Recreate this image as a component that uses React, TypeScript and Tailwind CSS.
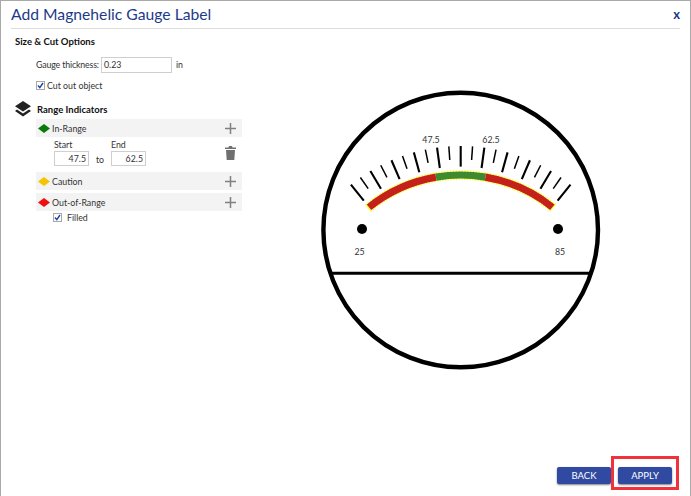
const CX = 460.7;
const CY = 321.6;
const STEP = 3.87;

const polar = (r: number, deg: number) => {
  const a = (deg * Math.PI) / 180;
  return { x: CX + r * Math.sin(a), y: CY - r * Math.cos(a) };
};

const arc = (r: number, from: number, to: number) => {
  const a = polar(r, from);
  const b = polar(r, to);
  return `M${a.x} ${a.y}A${r} ${r} 0 0 1 ${b.x} ${b.y}`;
};

const ticks = Array.from({ length: 21 }, (_, i) => {
  const deg = (i - 10) * STEP;
  const major = i % 2 === 0;
  const outer = polar(175.6, deg);
  const inner = polar(major ? 155 : 162, deg);
  return { key: i, major, outer, inner };
});

function Gauge() {
  return (
    <svg width="300" height="300" viewBox="311 80 300 300" className="shrink-0">
      <circle cx="460.7" cy="230" r="137.3" fill="none" stroke="#000" strokeWidth="4.4" />
      <line x1="331" y1="273.2" x2="590" y2="273.2" stroke="#000" strokeWidth="3" />
      {ticks.map((t) => (
        <line
          key={t.key}
          x1={t.outer.x}
          y1={t.outer.y}
          x2={t.inner.x}
          y2={t.inner.y}
          stroke="#000"
          strokeWidth={t.major ? 2.1 : 1.5}
        />
      ))}
      <path d={arc(146.6, -39.2, 39.2)} fill="none" stroke="#ffff00" strokeWidth="9.6" strokeDasharray="1.4 1.4" />
      <path d={arc(146.6, -38.7, -9.7)} fill="none" stroke="#c4211b" strokeWidth="7.2" />
      <path d={arc(146.6, -9.7, 9.7)} fill="none" stroke="#3f8a2e" strokeWidth="7.2" />
      <path d={arc(146.6, 9.7, 38.7)} fill="none" stroke="#c4211b" strokeWidth="7.2" />
      <circle cx="362" cy="229" r="5" fill="#000" />
      <circle cx="558" cy="229" r="5" fill="#000" />
      <g fontSize="8.8" fill="#333" textAnchor="middle" fontFamily="Lato, sans-serif">
        <text x="431" y="143">47.5</text>
        <text x="491" y="143">62.5</text>
        <text x="359.5" y="255">25</text>
        <text x="560" y="255">85</text>
      </g>
    </svg>
  );
}

function Check() {
  return (
    <span className="flex h-[9px] w-[9px] items-center justify-center border border-[#a8a8a8] bg-white">
      <svg width="7" height="7" viewBox="0 0 7 7">
        <path d="M1 3.5L2.8 5.6L6 1" fill="none" stroke="#1c3fa8" strokeWidth="1.4" />
      </svg>
    </span>
  );
}

function Plus() {
  return (
    <svg width="11" height="11" viewBox="0 0 11 11" className="mr-[6px]">
      <path d="M5.5 0V11M0 5.5H11" stroke="#808080" strokeWidth="1.5" />
    </svg>
  );
}

function RangeRow({ color, label }: { color: string; label: string }) {
  return (
    <div className="flex h-[18px] items-center justify-between bg-[#f3f3f3]">
      <div className="flex items-center">
        <svg width="12" height="9" viewBox="0 0 12 9" className="ml-[2px] mr-[2px]">
          <path d="M6 0L12 4.5L6 9L0 4.5Z" fill={color} />
        </svg>
        <span>{label}</span>
      </div>
      <Plus />
    </div>
  );
}

function NumberBox({ value }: { value: string }) {
  return (
    <div className="h-[15px] w-[35px] border border-[#cfcfcf] bg-white pr-[2px] text-right leading-[13px]">
      {value}
    </div>
  );
}

export default function App() {
  return (
    <div className="relative flex h-[496px] w-[691px] flex-col overflow-hidden border-x border-t border-[#a9a9a9] bg-white font-['Lato',sans-serif] text-[8.8px] text-[#333]">
      <header className="mx-[10px] flex h-[28px] shrink-0 items-center justify-between border-b border-[#dcdcdc]">
        <h1 className="text-[15.7px] text-[#1d3a8a]">Add Magnehelic Gauge Label</h1>
        <span className="text-[13px] font-bold text-[#1d3a8a]">x</span>
      </header>

      <main className="flex min-h-0 flex-1">
        <div className="w-[241px] shrink-0 pl-[14px] pt-[7px]">
          <h2 className="text-[9.5px] font-bold leading-[12px] text-[#111]">Size &amp; Cut Options</h2>

          <div className="ml-[21px] mt-[9px] flex items-center gap-[2px]">
            <span className="w-[63px] whitespace-nowrap tracking-[-0.15px]">Gauge thickness:</span>
            <div className="h-[16px] w-[71px] border border-[#cfcfcf] pl-[2px] leading-[13px]">0.23</div>
            <span className="ml-[2px]">in</span>
          </div>

          <label className="ml-[21px] mt-[6px] flex items-center gap-[2px]">
            <Check />
            <span>Cut out object</span>
          </label>

          <div className="mt-[9px] flex items-center gap-[6px]">
            <svg width="16" height="17" viewBox="0 0 16 17">
              <path d="M8 0L16 5.2L8 10.4L0 5.2Z" fill="#222" />
              <path d="M2 8.6L0 10L8 15.4L16 10L14 8.6L8 12.6Z" fill="#222" />
            </svg>
            <span className="text-[9.5px] font-bold text-[#111]">Range Indicators</span>
          </div>

          <div className="ml-[21px] mt-[1px]">
            <RangeRow color="#0a7a0a" label="In-Range" />
            <div className="flex h-[35px] items-start justify-between pl-[18px] pt-[2px]">
              <div className="flex items-end">
                <div>
                  <div className="leading-[12px]">Start</div>
                  <NumberBox value="47.5" />
                </div>
                <span className="w-[22px] text-center leading-[12px]">to</span>
                <div>
                  <div className="leading-[12px]">End</div>
                  <NumberBox value="62.5" />
                </div>
              </div>
              <svg width="11" height="14" viewBox="0 0 11 14" className="mr-[6px] mt-[7px]">
                <path d="M0 1.5H3.5L4 0H7L7.5 1.5H11V3H0ZM1 4H10L9.3 14H1.7Z" fill="#707070" />
              </svg>
            </div>
            <RangeRow color="#f5c400" label="Caution" />
            <div className="h-[3px]" />
            <RangeRow color="#ee1010" label="Out-of-Range" />
            <label className="ml-[17px] flex items-center gap-[5px]">
              <Check />
              <span>Filled</span>
            </label>
          </div>
        </div>

        <div className="flex min-w-0 flex-1 items-start justify-center pr-[10px] pt-[51px]">
          <Gauge />
        </div>
      </main>

      <footer className="flex h-[30px] shrink-0 items-start justify-end gap-[7px] pr-[18px] pt-[1px] pb-[12px]">
        <button className="h-[17px] w-[54px] rounded-[2px] bg-[#2f4aa0] text-[9.5px] leading-[17px] text-white shadow-[0_1px_2px_rgba(0,0,0,0.5)]">
          BACK
        </button>
        <button className="h-[17px] w-[54px] rounded-[2px] bg-[#2f4aa0] text-[9.5px] leading-[17px] text-white shadow-[0_1px_2px_rgba(0,0,0,0.5)]">
          APPLY
        </button>
      </footer>

      <div className="absolute left-[610px] top-[455px] h-[34px] w-[68px] border-[3px] border-[#f0323c]" />
    </div>
  );
}
